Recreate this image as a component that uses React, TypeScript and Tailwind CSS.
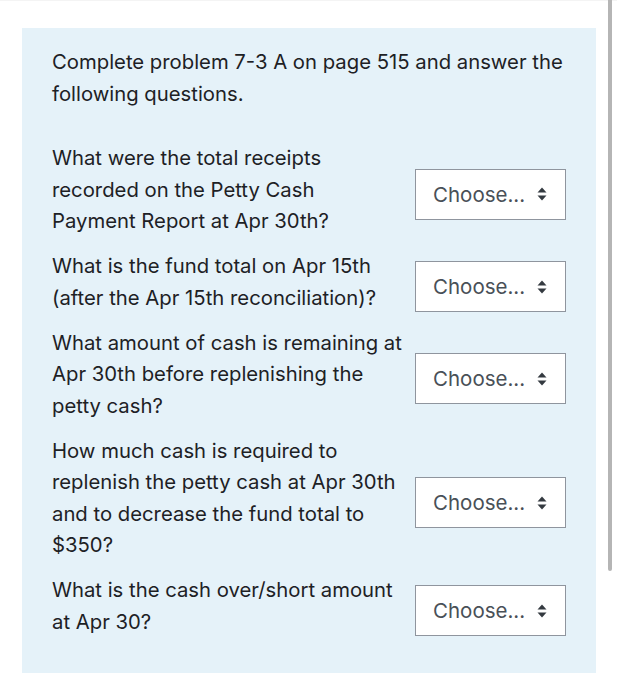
const questions: string[][] = [
  ['What were the total receipts', 'recorded on the Petty Cash', 'Payment Report at Apr 30th?'],
  ['What is the fund total on Apr 15th', '(after the Apr 15th reconciliation)?'],
  ['What amount of cash is remaining at', 'Apr 30th before replenishing the', 'petty cash?'],
  ['How much cash is required to', 'replenish the petty cash at Apr 30th', 'and to decrease the fund total to', '$350?'],
  ['What is the cash over/short amount', 'at Apr 30?'],
];

function ChooseSelect(): JSX.Element {
  return (
    <div className="flex h-[51px] w-[151px] items-center justify-between border border-[#8f959e] bg-white pl-[17px] pr-[18px] text-[20.5px] text-[#495057]">
      <span>Choose...</span>
      <svg width="10" height="14" viewBox="0 0 10 14" className="fill-[#343a40]">
        <path d="M5 0.5 L9.5 5.5 H0.5 Z" />
        <path d="M5 13.5 L9.5 8.5 H0.5 Z" />
      </svg>
    </div>
  );
}

export default function App(): JSX.Element {
  return (
    <div
      className="relative h-[700px] w-[617px] overflow-hidden bg-white"
      style={{ fontFamily: 'Inter, "Liberation Sans", sans-serif' }}
    >
      <div className="absolute right-[5px] top-0 h-[571px] w-[4px] rounded-b-full bg-[#b5b5b5]" />
      <div className="border-t border-[#f4f4f4] pt-[13px]" />
      <div className="ml-[22px] mt-[14px] w-[574px] bg-[#e5f2f9] px-[30px] pb-[36px] pt-[18px] text-[20.3px] leading-[31.5px] text-[#1d2125]">
        <p>Complete problem 7-3 A on page 515 and answer the following questions.</p>
        <div className="mt-[33px] flex flex-col gap-[13.5px]">
          {questions.map((lines) => (
            <div key={lines[0]} className="flex items-center justify-between">
              <p className="w-[356px] whitespace-nowrap">
                {lines.map((line, i) => (
                  <span key={line}>
                    {i > 0 ? <br /> : null}
                    {line}
                  </span>
                ))}
              </p>
              <div className="pt-[10px]">
                <ChooseSelect />
              </div>
            </div>
          ))}
        </div>
      </div>
    </div>
  );
}
